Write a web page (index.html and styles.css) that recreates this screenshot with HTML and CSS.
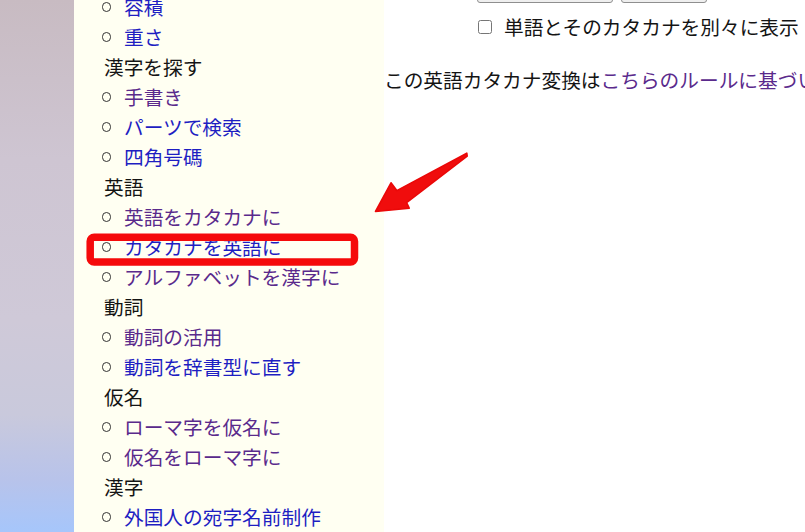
FILE: index.html
```html
<!DOCTYPE html>
<html lang="ja">
<head>
<meta charset="utf-8">
<title>英語カタカナ変換</title>
<link rel="stylesheet" href="styles.css">
</head>
<body>
<div class="page">
  <div class="strip"></div>
  <aside class="sidebar">
    <ul class="nav">
      <li class="group">
        <ul class="sub">
          <li><a href="#">容積</a></li>
          <li><a href="#">重さ</a></li>
        </ul>
      </li>
      <li class="group">
        <span class="cat">漢字を探す</span>
        <ul class="sub">
          <li><a class="visited" href="#">手書き</a></li>
          <li><a href="#">パーツで検索</a></li>
          <li><a href="#">四角号碼</a></li>
        </ul>
      </li>
      <li class="group">
        <span class="cat">英語</span>
        <ul class="sub">
          <li><a class="visited" href="#">英語をカタカナに</a></li>
          <li><a href="#">カタカナを英語に</a></li>
          <li><a class="visited" href="#">アルファベットを漢字に</a></li>
        </ul>
      </li>
      <li class="group">
        <span class="cat">動詞</span>
        <ul class="sub">
          <li><a class="visited" href="#">動詞の活用</a></li>
          <li><a href="#">動詞を辞書型に直す</a></li>
        </ul>
      </li>
      <li class="group">
        <span class="cat">仮名</span>
        <ul class="sub">
          <li><a class="visited" href="#">ローマ字を仮名に</a></li>
          <li><a class="visited" href="#">仮名をローマ字に</a></li>
        </ul>
      </li>
      <li class="group">
        <span class="cat">漢字</span>
        <ul class="sub">
          <li><a href="#">外国人の宛字名前制作</a></li>
        </ul>
      </li>
    </ul>
  </aside>
  <main class="main">
    <div class="controls">
      <div class="buttons">
        <button class="btn btn-wide" type="button" aria-label="変換"></button>
        <button class="btn btn-narrow" type="button" aria-label="クリア"></button>
      </div>
      <label class="option"><input class="check" type="checkbox"><span>単語とそのカタカナを別々に表示</span></label>
    </div>
    <p class="note">この英語カタカナ変換は<a class="visited" href="#">こちらのルールに基づいています。</a></p>
  </main>
</div>
<svg class="annotation" viewBox="0 0 805 532" width="805" height="532" aria-hidden="true">
  <rect x="90.2" y="237.3" width="264.3" height="24.6" rx="4" ry="4" fill="none" stroke="#f50a0a" stroke-width="7.5"/>
  <polygon points="375.5,211.5 391,182.8 396.8,190.6 466.8,153.2 467.2,156.2 406.6,202.6 409.2,208.2" fill="#f00d0d" stroke="#ea0808" stroke-width="1.6" stroke-linejoin="round"/>
</svg>
</body>
</html>
```

FILE: styles.css
```css
* { box-sizing: border-box; }

html, body {
  margin: 0;
  padding: 0;
  width: 805px;
  height: 532px;
  overflow: hidden;
  background: #ffffff;
}

body {
  position: relative;
  font-family: "Noto Sans CJK JP", "Noto Sans", sans-serif;
  font-size: 19.7px;
  line-height: 30px;
  color: #141414;
}

.page {
  display: flex;
  height: 532px;
}

.strip {
  flex: 0 0 74px;
  background: linear-gradient(180deg, #c8bbc2 0%, #cec5d2 30%, #cfc9d8 60%, #c9c9dc 78%, #b8c3ea 90%, #a6c6fb 100%);
}

.sidebar {
  flex: 0 0 310px;
  background: #fffff2;
  overflow: hidden;
}

.nav, .sub {
  list-style: none;
  margin: 0;
  padding: 0;
}

.nav {
  margin-top: -8px;
}

.cat {
  display: block;
  padding-left: 30px;
  white-space: nowrap;
}

.sub li {
  display: flex;
  align-items: center;
  padding-left: 27.5px;
  height: 30px;
  white-space: nowrap;
}

.sub li::before {
  content: "";
  flex: 0 0 7.5px;
  width: 7.5px;
  height: 7.5px;
  margin-right: 13px;
  border: 1.6px solid #333333;
  border-radius: 50%;
}

a {
  color: #1e1ec2;
  text-decoration: none;
}

a.visited {
  color: #5a2a8c;
}

.main {
  flex: 1;
  min-width: 0;
  padding-left: 0;
  overflow: hidden;
  white-space: nowrap;
}

.controls {
  margin-left: 93px;
  margin-top: -27px;
}

.buttons {
  display: flex;
  gap: 8px;
}

.btn {
  height: 30px;
  border: 1px solid #8f8f8f;
  border-radius: 3px;
  background: #efefef;
  padding: 0;
}

.btn-wide { width: 136px; }
.btn-narrow { width: 86px; }

.option {
  display: flex;
  align-items: center;
  gap: 12px;
  height: 30px;
  margin-top: 9px;
}

.check {
  width: 14px;
  height: 14px;
  margin: 0 0 0 1px;
}

.note {
  margin: 23px 0 0 0;
  line-height: 30px;
}

.annotation {
  position: absolute;
  left: 0;
  top: 0;
  pointer-events: none;
}
```
